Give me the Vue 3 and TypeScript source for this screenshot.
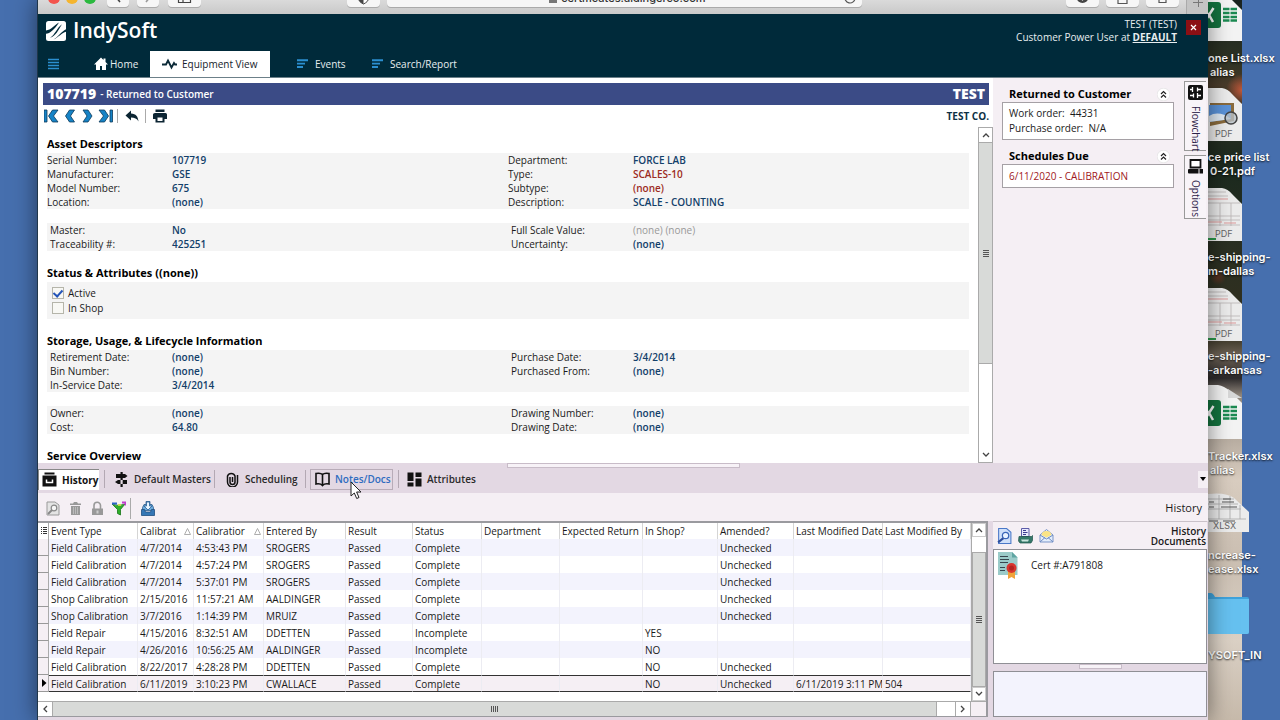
<script setup lang="ts">
import { ref } from 'vue'

interface Field { label: string; value: string; tone?: string }
interface Block { inset: boolean; left: Field[]; right: Field[] }

const assetBlocks: Block[] = [
  {
    inset: false,
    left: [
      { label: 'Serial Number:', value: '107719' },
      { label: 'Manufacturer:', value: 'GSE' },
      { label: 'Model Number:', value: '675' },
      { label: 'Location:', value: '(none)' },
    ],
    right: [
      { label: 'Department:', value: 'FORCE LAB' },
      { label: 'Type:', value: 'SCALES-10', tone: 'red' },
      { label: 'Subtype:', value: '(none)', tone: 'red' },
      { label: 'Description:', value: 'SCALE - COUNTING' },
    ],
  },
  {
    inset: true,
    left: [
      { label: 'Master:', value: 'No' },
      { label: 'Traceability #:', value: '425251' },
    ],
    right: [
      { label: 'Full Scale Value:', value: '(none) (none)', tone: 'mute' },
      { label: 'Uncertainty:', value: '(none)' },
    ],
  },
]

const storageBlocks: Block[] = [
  {
    inset: true,
    left: [
      { label: 'Retirement Date:', value: '(none)' },
      { label: 'Bin Number:', value: '(none)' },
      { label: 'In-Service Date:', value: '3/4/2014' },
    ],
    right: [
      { label: 'Purchase Date:', value: '3/4/2014' },
      { label: 'Purchased From:', value: '(none)' },
    ],
  },
  {
    inset: true,
    left: [
      { label: 'Owner:', value: '(none)' },
      { label: 'Cost:', value: '64.80' },
    ],
    right: [
      { label: 'Drawing Number:', value: '(none)' },
      { label: 'Drawing Date:', value: '(none)' },
    ],
  },
]

const active = ref(true)
const inShop = ref(false)

const columns = [
  { name: 'Event Type', cls: 'c-event', sort: false },
  { name: 'Calibrat', cls: 'c-date', sort: true },
  { name: 'Calibratior', cls: 'c-time', sort: true },
  { name: 'Entered By', cls: 'c-by', sort: false },
  { name: 'Result', cls: 'c-result', sort: false },
  { name: 'Status', cls: 'c-status', sort: false },
  { name: 'Department', cls: 'c-dept', sort: false },
  { name: 'Expected Return', cls: 'c-ret', sort: false },
  { name: 'In Shop?', cls: 'c-shop', sort: false },
  { name: 'Amended?', cls: 'c-amend', sort: false },
  { name: 'Last Modified Date', cls: 'c-mod', sort: false },
  { name: 'Last Modified By', cls: 'c-modby', sort: false },
]

const events: string[][] = [
  ['Field Calibration', '4/7/2014', '4:53:43 PM', 'SROGERS', 'Passed', 'Complete', '', '', '', 'Unchecked', '', ''],
  ['Field Calibration', '4/7/2014', '4:57:24 PM', 'SROGERS', 'Passed', 'Complete', '', '', '', 'Unchecked', '', ''],
  ['Field Calibration', '4/7/2014', '5:37:01 PM', 'SROGERS', 'Passed', 'Complete', '', '', '', 'Unchecked', '', ''],
  ['Shop Calibration', '2/15/2016', '11:57:21 AM', 'AALDINGER', 'Passed', 'Complete', '', '', '', 'Unchecked', '', ''],
  ['Shop Calibration', '3/7/2016', '1:14:39 PM', 'MRUIZ', 'Passed', 'Complete', '', '', '', 'Unchecked', '', ''],
  ['Field Repair', '4/15/2016', '8:32:51 AM', 'DDETTEN', 'Passed', 'Incomplete', '', '', 'YES', '', '', ''],
  ['Field Repair', '4/26/2016', '10:56:25 AM', 'AALDINGER', 'Passed', 'Incomplete', '', '', 'NO', '', '', ''],
  ['Field Calibration', '8/22/2017', '4:28:28 PM', 'DDETTEN', 'Passed', 'Complete', '', '', 'NO', 'Unchecked', '', ''],
  ['Field Calibration', '6/11/2019', '3:10:23 PM', 'CWALLACE', 'Passed', 'Complete', '', '', 'NO', 'Unchecked', '6/11/2019 3:11 PM', '504'],
]
const current = ref(events.length - 1)
</script>

<template>
  <div class="desktop">
    <main class="window">
      <div class="browser">
        <div class="browser-row">
          <span class="lights"><i class="l-red"></i><i class="l-yel"></i><i class="l-grn"></i></span>
          <span class="pair">
            <button class="bb w22" aria-label="Back"><svg viewBox="0 0 22 24"><path d="M13 8 8.500 13.500 13 19" fill="none" stroke="#444" stroke-width="1.600" /></svg></button>
            <button class="bb w22" aria-label="Forward"><svg viewBox="0 0 22 24"><path d="M9 8l4.500 5.500L9 19" fill="none" stroke="#999" stroke-width="1.600" /></svg></button>
          </span>
          <button class="bb w33" aria-label="Sidebar"><svg viewBox="0 0 33 24"><path d="M10.500 9.500h12v10h-12zM15 9.500v10" fill="none" stroke="#444" stroke-width="1.200" /></svg></button>
          <span class="grow"></span>
          <button class="bb w33" aria-label="Privacy report"><svg viewBox="0 0 33 24"><path d="M16.500 9l5 2v4c0 3-2 4.500-5 6-3-1.500-5-3-5-6v-4z" fill="#fff" stroke="#444" /><path d="M16.500 9v12c-3-1.500-5-3-5-6v-4z" fill="#444" /></svg></button>
          <label class="url">
            <svg viewBox="0 0 8 10"><path d="M0 4h8v6H0z" fill="#777" /></svg>
            <input type="text" value="certificates.aldingerco.com" aria-label="Address" />
            <svg class="reload" viewBox="0 0 12 12"><path d="M11 6a5 5 0 1 1-2-4" fill="none" stroke="#555" stroke-width="1.200" /></svg>
          </label>
          <span class="grow2"></span>
          <button class="bb w33" aria-label="Downloads"><svg viewBox="0 0 33 24"><circle cx="16.500" cy="14" r="6" fill="#444" /><path d="M16.500 11v6m-3-3 3 3 3-3" fill="none" stroke="#fff" stroke-width="1.200" /></svg></button>
          <button class="bb w33" aria-label="Share"><svg viewBox="0 0 33 24"><path d="M12 11.500h9v9h-9z" fill="none" stroke="#555" stroke-width="1.200" /></svg></button>
          <button class="bb w33" aria-label="Tabs"><svg viewBox="0 0 33 24"><path d="M13 11.500h7v8h-7z" fill="none" stroke="#555" stroke-width="1.200" /></svg></button>
          <button class="newtab" aria-label="New tab"><svg viewBox="0 0 20 31"><path d="M5 19.500h10M10.500 14v10" stroke="#777" fill="none" /></svg></button>
        </div>
      </div>

      <header class="head">
        <div class="head-top">
          <div class="brand">
            <svg viewBox="0 0 20 20" aria-hidden="true">
              <rect width="20" height="20" rx="2.500" fill="#fff" />
              <path d="M0 9.500C5 9 8.500 4 13 1.500 8 9 4 12.500 0 12.800z" fill="#002a3a" />
              <path d="M4 16.800C9 14 11 6.500 16 3.300 12 9.500 10 15 4 16.800z" fill="#002a3a" />
              <path d="M7.500 18.600C12 16 15.500 10.500 20 8.200v2.600C16 11.500 12.500 16.500 7.500 18.600z" fill="#002a3a" />
            </svg>
            <span>IndySoft</span>
          </div>
          <div class="user">
            <div>TEST (TEST)</div>
            <div>Customer Power User at <a href="#">DEFAULT</a></div>
          </div>
          <button class="close" aria-label="Close"><svg viewBox="0 0 15 15"><path d="m5 5 5 5m0-5-5 5" stroke="#fff" stroke-width="1.200" /></svg></button>
        </div>
        <nav class="nav">
          <button class="menu" aria-label="Menu"><svg viewBox="0 0 12 12"><path d="M0 1.500h11M0 4.500h11M0 7.500h11M0 10.500h11" stroke="#2b8fd0" stroke-width="1.600" /></svg></button>
          <a href="#" class="n-home"><svg viewBox="0 0 14 14"><path d="M7 .5 0 7.500h2V13h4V9h2v4h4V7.500h2L11.500 5V1.500h-2V3z" fill="#fff" /></svg>Home</a>
          <a href="#" class="n-active"><svg viewBox="0 0 16 12"><path d="M0 6.500h4l2-4 3.500 7L12 5l1 1.500h2" fill="none" stroke="#0c2a38" stroke-width="1.900" /></svg>Equipment View</a>
          <a href="#" class="n-item"><svg viewBox="0 0 12 10"><path d="M0 1.200h11M0 4.600h8M0 8h6" stroke="#2b8fd0" stroke-width="1.900" /></svg>Events</a>
          <a href="#" class="n-item second"><svg viewBox="0 0 12 10"><path d="M0 1.200h11M0 4.600h8M0 8h6" stroke="#2b8fd0" stroke-width="1.900" /></svg>Search/Report</a>
        </nav>
      </header>

      <section class="upper">
        <div class="main">
          <div class="title"><b>107719</b><span>- Returned to Customer</span><b class="right">TEST</b></div>
          <div class="tools">
            <button aria-label="First"><svg viewBox="0 0 15 14"><path d="M0 1h3v12H0z" /><path d="M8.500 1h5.500L9.500 7l4.500 6H8.500L4.500 7z" /></svg></button>
            <button aria-label="Previous"><svg viewBox="0 0 15 14"><path d="M7.500 1H12.500L8.500 7l4 6H7.500L3.500 7z" /></svg></button>
            <button aria-label="Next"><svg viewBox="0 0 15 14"><path d="M8 1H3L7 7l-4 6H8l4-6z" /></svg></button>
            <button aria-label="Last"><svg viewBox="0 0 15 14"><path d="M12 1h2.500v12H12z" /><path d="M6.500 1H1l4.500 6L1 13h5.500l4-6z" /></svg></button>
            <i class="sep"></i>
            <button class="dark" aria-label="Undo"><svg viewBox="0 0 14 14"><path d="M6 1.500v3c5 .3 7 3 7.500 8-1.500-3-4-4-7.500-4v3L.5 6.500z" /></svg></button>
            <i class="sep"></i>
            <button class="dark" aria-label="Print"><svg viewBox="0 0 14 14"><path d="M2.500.5h9V3h-9zM2 4h10.500Q14 4 14 5.500V10h-2.500v3.500h-9V10H0V5.500Q0 4 2 4z" /><path d="M4.500 8.500h5v3.500h-5z" fill="#fff" /></svg></button>
            <strong>TEST CO.</strong>
          </div>
          <div class="scroll">
            <div class="details">
              <h2>Asset Descriptors</h2>
              <div v-for="(b, i) in assetBlocks" :key="'a' + i" class="block" :class="{ inset: b.inset }">
                <dl v-for="(side, s) in [b.left, b.right]" :key="s">
                  <template v-for="f in side" :key="f.label"><dt>{{ f.label }}</dt><dd :class="f.tone">{{ f.value }}</dd></template>
                </dl>
              </div>
              <h2>Status &amp; Attributes ((none))</h2>
              <div class="checks">
                <label><input v-model="active" type="checkbox" />Active</label>
                <label><input v-model="inShop" type="checkbox" />In Shop</label>
              </div>
              <h2>Storage, Usage, &amp; Lifecycle Information</h2>
              <div v-for="(b, i) in storageBlocks" :key="'s' + i" class="block" :class="{ inset: b.inset }">
                <dl v-for="(side, s) in [b.left, b.right]" :key="s">
                  <template v-for="f in side" :key="f.label"><dt>{{ f.label }}</dt><dd :class="f.tone">{{ f.value }}</dd></template>
                </dl>
              </div>
              <h2>Service Overview</h2>
            </div>
            <div class="vbar">
              <button aria-label="Scroll up"><svg viewBox="0 0 8 6"><path d="m1 5 3-3 3 3" /></svg></button>
              <div class="thumb grip"></div>
              <div class="track"></div>
              <button aria-label="Scroll down"><svg viewBox="0 0 8 6"><path d="m1 1 3 3 3-3" /></svg></button>
            </div>
          </div>
        </div>

        <aside class="side">
          <div class="cards">
            <div class="card-head"><h3>Returned to Customer</h3><button aria-label="Collapse"><svg viewBox="0 0 13 13"><circle cx="6.500" cy="6.500" r="6.300" fill="#fff" /><path d="m4 6 2.500-2.500L9 6M4 9.500 6.500 7 9 9.500" /></svg></button></div>
            <div class="card"><div>Work order:&nbsp; 44331</div><div>Purchase order:&nbsp; N/A</div></div>
            <div class="card-head"><h3>Schedules Due</h3><button aria-label="Collapse"><svg viewBox="0 0 13 13"><circle cx="6.500" cy="6.500" r="6.300" fill="#fff" /><path d="m4 6 2.500-2.500L9 6M4 9.500 6.500 7 9 9.500" /></svg></button></div>
            <div class="card due">6/11/2020 - CALIBRATION</div>
          </div>
          <div class="vtabs">
            <button class="vt1"><svg viewBox="0 0 15 15"><rect width="15" height="15" rx="2" fill="#111" /><path d="M4.500 2v5M2 4.500h3M9.500 2.500v4M9.500 4.500h3.500M2 10.500h3.500M5.500 8.500v4M9.500 8v5M9.500 10.500h3.500" stroke="#fff" stroke-width="1.300" /></svg><span>Flowchart</span></button>
            <button class="vt2"><svg viewBox="0 0 15 15"><path d="M2.500 1h10v7.500h-10z" fill="#fff" stroke="#111" stroke-width="1.800" /><path d="M1 10h9.500v4.500H1q-1 0-1-1V11q0-1 1-1zM11.500 10H15v4.500h-3.500z" fill="#111" /></svg><span>Options</span></button>
          </div>
        </aside>
      </section>

      <div class="splitter"><i></i></div>
      <div class="tabs">
        <button class="on"><svg viewBox="0 0 15 15"><path d="M2.500.5h10v2h-10zM.5 3.500h14v11H.500z" fill="#111" /><path d="M4.500 7.500v3h6v-3" fill="none" stroke="#fff" stroke-width="1.500" /></svg>History</button>
        <i class="tsep"></i>
        <button class="t2"><svg viewBox="0 0 15 15"><path d="M6.500 0h2.200v15H6.500zM2 2h9l2.500 2L11 6H2zM13 8H4L1 10l3 2h9z" fill="#111" /></svg>Default Masters</button>
        <i class="tsep"></i>
        <button class="t3"><svg viewBox="0 0 15 15"><path d="M5 5v5a2.500 2.500 0 0 0 5 0V4A4 4 0 0 0 2.500 4v6a5 5 0 0 0 10 0V3M7.500 5v5" fill="none" stroke="#111" stroke-width="1.500" /></svg>Scheduling</button>
        <i class="tsep"></i>
        <button class="hover">
          <svg viewBox="0 0 15 15"><path d="M7.500 2.500C6 1 3.500 1 1 1.500v10.500c2.500-.4 5-.2 6.500 1.500 1.500-1.700 4-1.900 6.500-1.500V1.500C11.500 1 9 1 7.500 2.500zv11" fill="none" stroke="#111" stroke-width="1.600" /></svg>Notes/Docs
          <svg class="cursor" viewBox="0 0 12 19"><path d="M1 1v14l3.300-3 2.400 5.500 2.300-1L6.600 11H11z" fill="#fff" stroke="#222" /></svg>
        </button>
        <i class="tsep"></i>
        <button class="t5"><svg viewBox="0 0 15 15"><path d="M.5.500h6v8.500h-6zM8.500.500h6v4.500h-6zM.5 10.500h6v4h-6zM8.500 6.500h6v8h-6z" fill="#111" /></svg>Attributes</button>
        <button class="drop" aria-label="More tabs"><svg viewBox="0 0 8 5"><path d="M1 0h6L4 4z" fill="#000" /></svg></button>
      </div>

      <div class="bar">
        <button aria-label="Preview"><svg viewBox="0 0 14 15"><path d="M1 1h8l4 3v10H1z" fill="#e4e4e4" stroke="#999" /><circle cx="8" cy="7" r="2.800" fill="#f6f6f6" stroke="#888" stroke-width="1.200" /><path d="m6 9-4 4" stroke="#888" stroke-width="2" /></svg></button>
        <button aria-label="Delete"><svg viewBox="0 0 14 15"><path d="M2 2.500h3l1-1.500h3l1 1.500h3V4H2zM3 5h9v9H3z" fill="#999" /><path d="M5.500 6v7m2-7v7m2-7v7" stroke="#bbb" /></svg></button>
        <button aria-label="Unlock"><svg viewBox="0 0 14 15"><path d="M4 8V4.500a3 3 0 0 1 6.500 0V8" fill="none" stroke="#999" stroke-width="1.600" /><path d="M2 7.500h11v6.500H2z" fill="#999" /><path d="M6.500 9.500h2v3h-2z" fill="#ccc" /></svg></button>
        <button aria-label="Filter"><svg viewBox="0 0 14 15"><path d="M0 3q7 3 13 0L8.500 8.500V14l-3-1.500v-4z" fill="#2fae2a" stroke="#167516" stroke-width=".8" /><path d="M0 2.500h5" stroke="#2c62c8" stroke-width="2" /><path d="M6 4h3" stroke="#c9e24a" stroke-width="1.800" /><path d="M10 1.500h3.500v3" fill="none" stroke="#c33bd0" stroke-width="1.800" /></svg></button>
        <i class="bsep"></i>
        <button aria-label="Export"><svg viewBox="0 0 14 15"><path d="M1.500 6.500 3 3.500h2v-3h4v3h2l1.500 3v3h-11z" fill="#6aa9dc" stroke="#1f4f80" stroke-width=".7" /><path d="M5.500 1h3v4h2.500L7 9 3 5h2.500z" fill="#e8f4ff" stroke="#2a5f95" stroke-width=".8" /><path d="M.5 8.500h3l1 2.500h5l1-2.500h3v6H.5z" fill="#3577b5" stroke="#1f4f80" stroke-width=".8" /></svg></button>
        <span>History</span>
      </div>

      <section class="lower">
        <div class="gridwrap">
          <div class="gridtop">
            <div class="tablebox">
              <table>
                <colgroup><col class="c-ind" /><col v-for="c in columns" :key="c.cls" :class="c.cls" /></colgroup>
                <thead>
                  <tr>
                    <th class="ind"><svg viewBox="0 0 6 8"><path d="M0 .5h1M2 .5h4M0 2.500h1M2 2.500h4M0 4.500h1M2 4.500h4M0 6.500h1M2 6.500h4" stroke="#333" /></svg></th>
                    <th v-for="c in columns" :key="c.name"><div><span>{{ c.name }}</span><svg v-if="c.sort" viewBox="0 0 7 7"><path d="M3.500.5 6.500 6.500h-6z" fill="#fff" stroke="#999" stroke-width=".8" /></svg></div></th>
                  </tr>
                </thead>
                <tbody>
                  <tr v-for="(r, i) in events" :key="i" :class="{ current: i === current }" @click="current = i">
                    <td class="ind"><svg v-if="i === current" viewBox="0 0 5 8"><path d="M0 0v8l4.500-4z" fill="#000" /></svg></td>
                    <td v-for="(v, j) in r" :key="j">{{ v }}</td>
                  </tr>
                </tbody>
              </table>
            </div>
            <div class="vbar gridbar">
              <button aria-label="Scroll up"><svg viewBox="0 0 8 6"><path d="m1 5 3-3 3 3" /></svg></button>
              <div class="track"></div>
              <div class="thumb grip"></div>
              <button aria-label="Scroll down"><svg viewBox="0 0 8 6"><path d="m1 1 3 3 3-3" /></svg></button>
            </div>
          </div>
          <div class="hbar">
            <button aria-label="Scroll left"><svg viewBox="0 0 6 8"><path d="M5 1 2 4l3 3" /></svg></button>
            <div class="hthumb"></div>
            <div class="htrack"></div>
            <button aria-label="Scroll right"><svg viewBox="0 0 6 8"><path d="m1 1 3 3-3 3" /></svg></button>
            <div class="corner"></div>
          </div>
        </div>
        <div class="docs">
          <div class="docs-bar">
            <button aria-label="View document"><svg viewBox="0 0 14 15"><path d="M1.500.5h7.500l4 3.500v10.500H1.500z" fill="#cfe0fa" stroke="#4a78c8" /><circle cx="8" cy="7" r="3" fill="#eaf3ff" stroke="#3a66b8" stroke-width="1.200" /><path d="m6 9.500-5 4" stroke="#2e4e9c" stroke-width="2" /></svg></button>
            <button aria-label="Print document"><svg viewBox="0 0 15 16"><path d="M3.500.5h7.500v8H3.500z" fill="#e9e9ff" stroke="#5c5ca8" /><path d="M5 2.500h3M5 4.500h4.500M5 6.500h3" stroke="#3c3c90" /><path d="M1 8.500h12.500l1-1v5l-1.500 2.500H2L.500 13z" fill="#35786a" stroke="#1e5348" stroke-width=".7" /><path d="M3 11.500h8l-1 2H4z" fill="#c7e4dc" /></svg></button>
            <button aria-label="Mail document"><svg viewBox="0 0 15 15"><path d="M1 6.500 7.500 1 14 6.500v7H1z" fill="#e4eefc" stroke="#7b95c8" /><path d="M2.500 6.500Q3 2.500 7.500 2.500t5 4L7.500 9z" fill="#fbe486" /><path d="m1 6.500 6.500 4 6.500-4M1 13.500l5-4.500m8 4.500L9 9" fill="none" stroke="#6f8cc4" /></svg></button>
            <b>History<br />Documents</b>
          </div>
          <div class="list">
            <svg viewBox="0 0 20 27"><path d="M0 0h14l5.500 5.500V23H0z" fill="#9bcbc9" /><path d="M14 0v5.500h5.500z" fill="#5fa5a2" /><path d="M2 4.500h8M2 7.500h9M2 10.500h8M2 15.500h5M2 18.500h5" stroke="#37474f" stroke-width="1.200" /><path d="M10 17h7v10l-3.500-2L10 27z" fill="#f0a33a" /><circle cx="13.500" cy="16" r="5" fill="#d8352f" /><circle cx="13.500" cy="16" r="2.500" fill="#b32420" /></svg>
            <span>Cert #:A791808</span>
          </div>
          <div class="mini"><i></i></div>
          <div class="preview"></div>
        </div>
      </section>
    </main>

    <aside class="shelf">
      <div class="wall"></div>
      <div class="ic p1"><svg viewBox="0 0 36 42"><path d="M0 0h24l10 10v31H0z" fill="#f4f4f4" /><path d="M0 2h10q3 0 3 3v20q0 3-3 3H0z" fill="#14733f" /><path d="M5 22 0 13M5.500 8-1 18" stroke="#fff" stroke-width="2.500" fill="none" /><path d="M15 9h14M15 13h14M15 17h14M15 20.500h14" stroke="#1b8a52" stroke-width="2.600" /><path d="M22 7v15" stroke="#f4f4f4" /></svg></div>
      <p class="p2">one List.xlsx<br /><span>alias</span></p>
      <div class="ic p3"><svg viewBox="0 0 36 53"><path d="M0 0h14q6 1 10 6l10 10v37H0z" fill="#ededed" /><path d="M2 15h24v18L2 38z" fill="#8a6b3d" /><path d="M1 17h22v14L1 34z" fill="#5b93d8" /><path d="M1 28q10-6 22 3L1 34z" fill="#dfe9f2" /><circle cx="23" cy="30" r="6" fill="#b9c2c8" fill-opacity=".8" stroke="#444" stroke-width="1.500" /><text x="7" y="49" class="ft">PDF</text></svg></div>
      <p class="p4">ce price list<br /><span>0-21.pdf</span></p>
      <div v-for="k in 2" :key="k" class="ic" :class="'p5-' + k"><svg viewBox="0 0 36 53"><path d="M0 0h14q6 1 10 6l10 10v37H0z" fill="#ececec" /><path d="M0 4h18M0 8h20M0 15h32M0 28h32M0 32h32M0 37h32M12 15v23M23 15v23" stroke="#b9b4b4" stroke-width=".8" /><path d="M0 11h20M0 34h14M16 35h12" stroke="#d99" /><path d="M0 51h8" stroke="#2b9a4a" stroke-width="2" /><text x="7" y="49" class="ft">PDF</text></svg></div>
      <p class="p6">e-shipping-<br />m-dallas</p>
      <p class="p7">e-shipping-<br />-arkansas</p>
      <div class="ic p8"><svg viewBox="0 0 36 54"><path d="M0 0h10q6 1 12 6l12 12v36H0z" fill="#f4f4f4" /><path d="M20 4v9h14z" fill="#d8d8d8" /><path d="M0 15h10q3 0 3 3v20q0 3-3 3H0z" fill="#14733f" /><path d="M5 35 0 26M5.500 21-1 31" stroke="#fff" stroke-width="2.500" fill="none" /><path d="M15 22h14M15 26h14M15 30h14M15 33.500h14" stroke="#1b8a52" stroke-width="2.600" /><path d="M22 20v15" stroke="#f4f4f4" /></svg></div>
      <p class="p9">Tracker.xlsx<br /><span>alias</span></p>
      <div class="ic p10"><svg viewBox="0 0 42 40"><path d="M0 1q18-2 26 4l15 14v20H0z" fill="#ececec" /><path d="M0 6h26M0 11h30M0 16h33M0 26h38M11 2v24M22 3v23M32 12v14" stroke="#aaa" stroke-width=".8" /><path d="M1 9h5M1 14h5M15 6h8M14 9h12M13 14h16M1 28h9M15 28h12" stroke="#555" /><text x="5" y="36" class="ft">XLSX</text></svg></div>
      <p class="p11">ncrease-<br />ease.xlsx</p>
      <div class="ic p12"><svg viewBox="0 0 42 42"><path d="M0 0h3q2 0 4 4h32q2 0 2 2v33q0 2-2 2H0z" fill="#3fa3dc" /><path d="M0 6h41v33q0 2-2 2H0z" fill="#66c1f0" /></svg></div>
      <p class="p13">YSOFT_IN</p>
    </aside>
  </div>
</template>

<style>
html, body { margin: 0; background: #466fae; }
</style>

<style scoped>
* { box-sizing: border-box; }
.desktop { position: relative; display: flex; height: 100vh; min-height: 720px; overflow: hidden; background: #466fae; padding-left: 37px; font-family: "Open Sans", "Noto Sans", sans-serif; font-size: 10px; line-height: 14px; color: #1a1a1a; }
button { font: inherit; color: inherit; border: 0; padding: 0; margin: 0; background: none; display: flex; align-items: center; }
svg { display: block; flex: none; }
a { color: inherit; text-decoration: none; }
h2, h3, p, dl, dd { margin: 0; }
.window { position: relative; z-index: 1; flex: 1; min-width: 0; display: flex; flex-direction: column; background: #f5eff4; border-left: 1px solid #20364a; box-shadow: 0 0 22px rgba(0, 0, 0, .5); }

.browser { height: 14px; overflow: hidden; background: linear-gradient(#dadada, #c9c9c9); display: flex; align-items: flex-end; }
.browser-row { display: flex; width: 100%; height: 31px; align-items: flex-start; flex: none; padding-left: 10px; }
.lights { display: flex; gap: 6px; margin: 9px 11px 0 0; }
.lights i { width: 12px; height: 12px; border-radius: 50%; }
.l-red { background: #f3544d; } .l-yel { background: #f5b52e; } .l-grn { background: #2bb93f; }
.pair { display: flex; gap: 1px; margin-right: 9px; }
.bb { height: 24px; background: #f6f6f6; border-radius: 4px; box-shadow: 0 1px 0 #aaa; flex: none; }
.w22 { width: 22px; } .w33 { width: 33px; }
.bb svg { width: 100%; height: 24px; }
.grow { flex: 149; } .grow2 { flex: 208; }
.url { display: flex; align-items: center; flex: 472; height: 24px; margin-left: 7px; background: #f6f6f6; border-radius: 4px; box-shadow: 0 1px 0 #aaa; padding: 0 6px; justify-content: center; }
.url svg { width: 8px; height: 10px; margin: 6px 4px 0 156px; }
.url .reload { width: 12px; height: 12px; margin: 6px 0 0; }
.url input { border: 0; background: none; outline: 0; flex: 1; min-width: 0; height: 24px; padding: 6px 0 0; font: 500 11px "Inter", sans-serif; color: #333; }
.bb + .bb { margin-left: 7px; }
.newtab { width: 22px; height: 31px; margin-left: 7px; border-left: 1px solid #aaa; justify-content: center; background: #c4c4c4; }
.newtab svg { width: 20px; height: 31px; }

.head { background: #002a3a; color: #e8eef0; height: 64px; display: flex; flex-direction: column; border-bottom: 1px solid #6c8089; }
.head-top { display: flex; height: 37px; flex: none; padding: 0 7px 0 8px; align-items: flex-start; }
.brand { display: flex; gap: 7px; margin-top: 6px; flex: 1; }
.brand svg { width: 20px; height: 20px; margin-top: 1px; }
.brand span { font-size: 21px; line-height: 20px; font-weight: 600; color: #fff; }
.user { text-align: right; line-height: 13px; padding-top: 4px; }
.user a { font-weight: 700; text-decoration: underline; }
.close { width: 15px; height: 15px; background: #8c0f14; margin: 6px 0 0 9px; }
.close svg { width: 15px; height: 15px; }
.nav { display: flex; flex: 1; font-size: 10px; align-items: stretch; }
.nav a, .nav button { display: flex; align-items: center; white-space: nowrap; }
.menu { width: 12px; margin: 0 34px 0 10px; }
.menu svg { width: 12px; height: 12px; }
.n-home { gap: 2px; width: 56px; }
.n-home svg { width: 14px; height: 14px; }
.nav .n-active { background: #fff; color: #16232b; width: 120px; padding-left: 12px; gap: 4px; }
.n-active svg { width: 16px; height: 12px; }
.n-item { gap: 6px; margin-left: 27px; width: 48px; }
.n-item.second { width: 90px; }
.n-item svg { width: 12px; height: 10px; }

.upper { display: flex; height: 385px; flex: none; background: #fff; }
.main { flex: 1; min-width: 0; display: flex; flex-direction: column; padding-top: 5px; }
.title { display: flex; align-items: center; gap: 4px; height: 22px; margin: 0 4px 0 5px; padding: 0 4px; background: #3b4b86; color: #fff; font-weight: 600; }
.title b { font-size: 14px; }
.title .right { margin-left: auto; }
.tools { display: flex; align-items: center; height: 22px; margin: 0 4px 0 6px; flex: none; }
.tools button { width: 15px; height: 14px; margin-right: 3px; fill: #1683c6; stroke: #0c3a5a; stroke-width: .8; }
.tools svg { width: 15px; height: 14px; }
.tools .dark { fill: #0c2533; stroke: none; margin-right: 4px; }
.tools .dark svg { width: 14px; }
.tools strong { margin-left: auto; color: #0d3045; }
.sep { width: 1px; height: 14px; background: #aaa; margin: 0 7px 0 1px; }
.scroll { display: flex; flex: 1; min-height: 0; }
.details { flex: 1; min-width: 0; padding: 8px 9px 0 9px; overflow: hidden; }
h2 { font-size: 11px; line-height: 18px; height: 18px; font-weight: 700; color: #000; margin-top: 13px; }
.details h2:first-child { margin-top: 0; }
.block { display: grid; grid-template-columns: 1fr 1fr; background: #f4f4f4; }
.block + .block { margin-top: 14px; }
.block dl { display: grid; grid-template-columns: 125px 1fr; grid-auto-rows: 14px; align-content: start; }
.inset dl dt { padding-left: 3px; }
dd { font-weight: 600; color: #12406a; }
dd.red { color: #9c2b22; }
dd.mute { color: #999; font-weight: 400; }
.checks { background: #f4f4f4; height: 37px; padding: 3px 5px; display: flex; flex-direction: column; }
.checks label { display: flex; align-items: center; gap: 4px; height: 15px; }
.checks input { appearance: none; width: 12px; height: 12px; margin: 0; border: 1px solid #b5b5aa; background: #f8f8f4; display: flex; justify-content: center; }
.checks input:checked::after { content: ""; width: 4px; height: 7px; border: solid #2455b8; border-width: 0 2px 2px 0; transform: rotate(42deg); }

.vbar { width: 15px; display: flex; flex-direction: column; border: 1px solid #aaa; background: #fff; }
.vbar button { height: 14px; justify-content: center; flex: none; }
.vbar svg, .hbar svg { fill: none; stroke: #444; stroke-width: 1.300; }
.vbar svg { width: 8px; height: 6px; }
.thumb { flex: 221; background: #d8dad8; border: solid #aaa; border-width: 1px 0; display: flex; align-items: center; justify-content: center; }
.grip::after { content: ""; width: 6px; height: 7px; background: repeating-linear-gradient(#555 0 1px, transparent 1px 2px); }
.track { flex: 84; }

.side { width: 215px; flex: none; background: #f5eff4; display: flex; }
.cards { width: 172px; margin-left: 9px; padding-top: 8px; }
.card-head { display: flex; align-items: center; justify-content: space-between; height: 16px; padding: 0 4px 0 7px; }
h3 { font-size: 11px; line-height: 16px; font-weight: 700; color: #000; }
.card-head svg { width: 13px; height: 13px; fill: none; stroke: #222; stroke-width: 1.200; }
.card-head circle { stroke: #ddd; stroke-width: .6; }
.card { border: 1px solid #a5a0a5; background: #fff; padding: 3px 6px; line-height: 15px; margin-bottom: 8px; }
.due { color: #a01822; padding: 4px 6px 3px; }
.vtabs { margin: 3px 0 0 10px; flex: 1; display: flex; flex-direction: column; gap: 4px; }
.vtabs button { flex-direction: column; border: 1px solid #999; border-right: 0; width: 22px; padding-top: 3px; gap: 6px; background: #f8f4f8; }
.vtabs svg { width: 15px; height: 15px; }
.vtabs span { writing-mode: vertical-rl; color: #2c2248; }
.vt1 { height: 70px; } .vt2 { height: 64px; }

.splitter { height: 5px; background: #e3d8e3; display: flex; justify-content: center; flex: none; }
.splitter i { width: 233px; height: 5px; background: #f7f2f7; border: 1px solid #c8bcc8; }
.tabs { position: relative; display: flex; align-items: center; height: 25px; flex: none; background: #e3d8e3; padding-bottom: 3px; font-weight: 600; color: #2a2a2a; }
.tabs button { height: 21px; gap: 5px; white-space: nowrap; }
.tabs button svg { width: 15px; height: 15px; }
.tabs .on { width: 61px; background: #fff; border: solid #888; border-width: 1px 0 0 1px; padding-left: 3px; font-weight: 700; color: #111; }
.tsep { width: 1px; height: 18px; background: #b3a8b3; margin: 0 4px 0 5px; }
.tabs .t2 { width: 100px; padding-left: 5px; }
.tabs .t3 { width: 81px; padding-left: 6px; }
.tabs .hover { position: relative; width: 83px; border: 1px solid #b8acb8; color: #2f6cc0; padding-left: 4px; }
.tabs .t5 { padding-left: 4px; }
.tabs button .cursor { position: absolute; left: 39px; top: 11px; width: 12px; height: 19px; z-index: 2; }
.tabs .drop { width: 10px; height: 17px; margin-left: auto; background: #f5eff4; justify-content: center; }
.tabs .drop svg { width: 8px; height: 5px; }

.bar { display: flex; align-items: center; height: 28px; flex: none; padding: 2px 6px 0 8px; }
.bar button { margin-right: 8px; }
.bar svg { width: 14px; height: 15px; }
.bsep { width: 1px; height: 21px; background: #aaa; margin: 0 10px 0 -4px; }
.bar span { margin-left: auto; font-size: 11px; }

.lower { display: flex; flex: 1; min-height: 0; padding-bottom: 3px; background: #e3d8e3; gap: 5px; }
.gridwrap { flex: 1; min-width: 0; display: flex; flex-direction: column; border-top: 2px solid #9a9a9f; border-right: 2px solid #9a9a9f; border-bottom: 1px solid #9a9a9f; background: #fff; }
.gridtop { display: flex; flex: 1; min-height: 0; }
.tablebox { flex: 1; min-width: 0; overflow: hidden; }
table { table-layout: fixed; width: 100%; border-collapse: separate; border-spacing: 0; }
.c-ind { width: 11px; } .c-event { width: 89px; } .c-date { width: 56px; } .c-time { width: 70px; } .c-by { width: 82px; } .c-result { width: 67px; }
.c-status { width: 69px; } .c-dept { width: 78px; } .c-ret { width: 83px; } .c-shop { width: 75px; } .c-amend { width: 76px; } .c-mod { width: 89px; }
th, td { height: 17px; padding: 0 2px; text-align: left; font-weight: 400; white-space: nowrap; overflow: hidden; line-height: 14px; border-right: 1px solid #ececf2; }
th { height: 16px; border-right-color: #d5d5d5; padding: 0 0 0 2px; }
th div { display: flex; align-items: center; justify-content: space-between; padding-right: 2px; }
th div svg { width: 7px; height: 7px; }
.ind { padding: 0 2px; border-right: 1px solid #aaa; border-bottom: 1px solid #999; background: #f5eff4; }
th.ind { background: #fff; border-bottom: 0; }
th.ind svg { width: 6px; height: 8px; margin-left: 1px; }
td.ind svg { width: 5px; height: 8px; margin-left: 2px; }
tbody tr:nth-child(odd) td:not(.ind) { background: #f3f3fd; }
tbody tr.current td:not(.ind) { background: #f5eff4; border-top: 1px solid #333; border-bottom: 1px solid #333; }
.gridbar { border-width: 0 0 0 1px; }
.gridbar .track { flex: 15; } .gridbar .thumb { flex: 132; border-width: 1px 1px; border-color: #aaa; }
.gridbar button { border: 1px solid #ccc; }
.hbar { display: flex; height: 15px; flex: none; border-top: 1px solid #aaa; }
.hbar button { width: 15px; justify-content: center; border-right: 1px solid #aaa; flex: none; }
.hbar svg { width: 6px; height: 8px; }
.hthumb { flex: 885; background: #d8dad8; border-right: 1px solid #aaa; display: flex; align-items: center; justify-content: center; }
.hthumb::after { content: ""; width: 7px; height: 6px; background: repeating-linear-gradient(90deg, #555 0 1px, transparent 1px 2px); }
.htrack { flex: 18; border-right: 1px solid #aaa; }
.corner { width: 15px; background: #f5eff4; flex: none; }

.docs { width: 215px; flex: none; display: flex; flex-direction: column; padding-right: 1px; }
.docs-bar { display: flex; align-items: center; gap: 6px; height: 28px; background: #f5eff4; border-top: 1px solid #c9c2c9; padding: 0 1px 0 4px; }
.docs-bar svg { width: 15px; height: 16px; }
.docs-bar b { margin-left: auto; text-align: right; line-height: 10px; font-weight: 600; }
.list { flex: 115; background: #fff; border: 1px solid #8f8f95; padding: 2px 4px; display: flex; gap: 13px; }
.list svg { width: 20px; height: 27px; }
.list span { padding-top: 6px; }
.mini { height: 7px; display: flex; justify-content: center; flex: none; }
.mini i { width: 43px; height: 5px; background: #f7f2f7; border: 1px solid #c8bcc8; }
.preview { flex: 46; background: #f3f3fd; border: 1px solid #8f8f95; }

.shelf { position: relative; width: 72px; flex: none; }
.wall { width: 34px; height: 100%; background: radial-gradient(circle at 34px 90px, #c0583a 0, transparent 16px), radial-gradient(circle at 10px 277px, #5b3020 0, transparent 8px), linear-gradient(#1b2420 0, #2d3324 60px, #4a3b2a 85px, #2a2f22 105px, #1c2a1f 170px, #2b3023 250px, #33301f 335px, #6e6356 355px, #2d2a2b 378px, #8f857b 395px, #b9aea2 440px, #d9cdc0 480px, #cbbfb2 560px, #dbd1c5 640px, #c7baab 720px); }
.ic, .shelf p { position: absolute; left: 0; }
.ic svg { width: 36px; }
.p1 { top: 0; } .p1 svg { height: 42px; }
.p3 { top: 88px; } .p5-1 { top: 188px; } .p5-2 { top: 288px; }
.p3 svg, .p5-1 svg, .p5-2 svg { height: 53px; }
.p8 { top: 385px; } .p8 svg { height: 54px; }
.p10 { top: 493px; } .p10 svg { width: 42px; height: 40px; }
.p12 { top: 593px; } .p12 svg { width: 42px; height: 42px; }
.ft { font: 9px "Inter", sans-serif; fill: #666; }
.shelf p { font: 600 11px/14px "Inter", sans-serif; color: #fff; text-shadow: 0 1px 2px rgba(0, 0, 0, .8); white-space: nowrap; }
.p2 { top: 51px; } .p4 { top: 150px; } .p6 { top: 250px; } .p7 { top: 349px; } .p9 { top: 449px; } .p11 { top: 548px; } .p13 { top: 648px; }
.shelf p span { padding-left: 2px; }
</style>
